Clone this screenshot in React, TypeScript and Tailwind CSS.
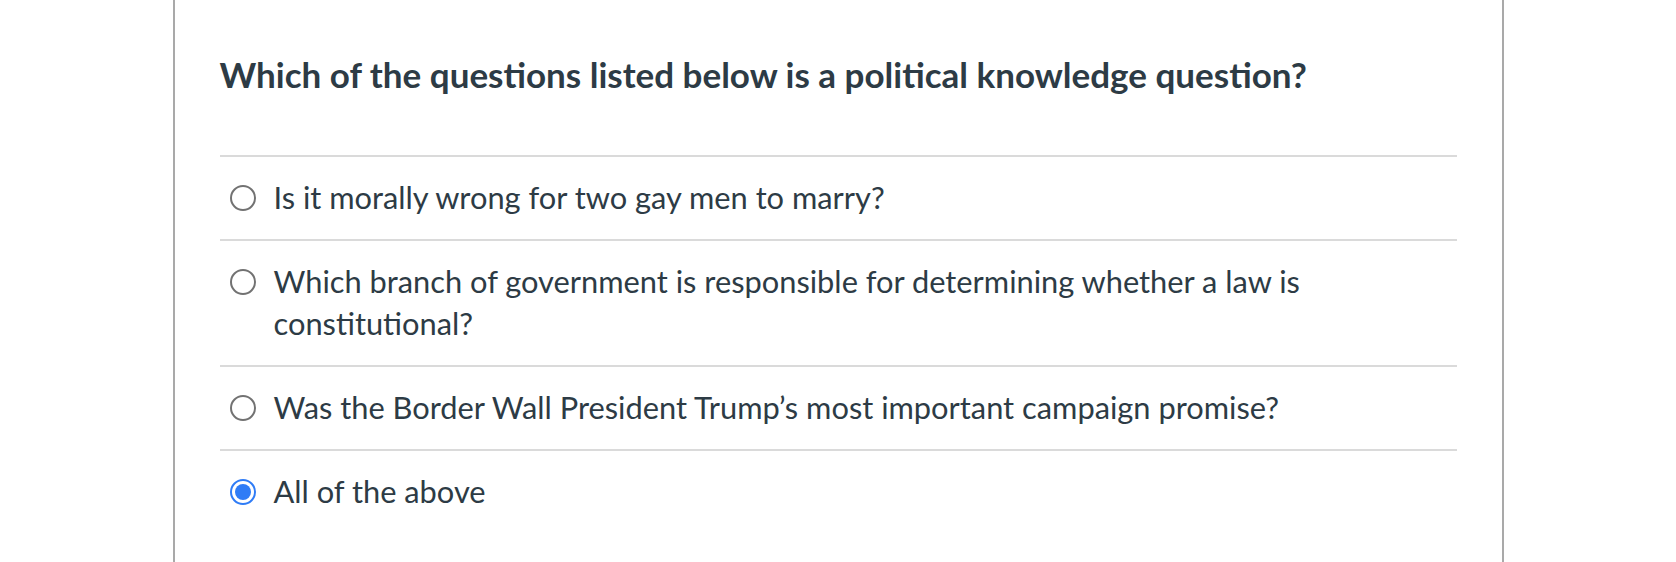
const options = [
  { id: 'a', text: 'Is it morally wrong for two gay men to marry?' },
  { id: 'b', text: 'Which branch of government is responsible for determining whether a law is constitutional?' },
  { id: 'c', text: 'Was the Border Wall President Trump\u2019s most important campaign promise?' },
  { id: 'd', text: 'All of the above' },
];

function Radio({ checked }: { checked: boolean }) {
  if (checked) {
    return (
      <span className="flex h-[26px] w-[26px] items-center justify-center rounded-full border-2 border-[#2f7cf6] bg-white">
        <span className="h-[16px] w-[16px] rounded-full bg-[#2f7cf6]" />
      </span>
    );
  }
  return <span className="block h-[26px] w-[26px] rounded-full border-2 border-[#727272] bg-white" />;
}

export default function App() {
  const selected = 'd';

  return (
    <div className="h-[562px] w-full overflow-hidden bg-white font-['Lato','Liberation_Sans',sans-serif] text-[#2d3b45]">
      <div className="mx-auto h-full w-[1331px] border-x-2 border-[#a9a9a9] px-[45px] pt-[49px]">
        <h2 className="text-[35px] font-bold leading-[50px]">
          Which of the questions listed below is a political knowledge question?
        </h2>

        <div className="mt-[56px]">
          {options.map((opt) => (
            <div key={opt.id} className="flex items-start gap-[18px] border-t-2 border-[#dadada] py-[20px]">
              <div className="ml-[10px] flex h-[42px] shrink-0 items-center">
                <Radio checked={selected === opt.id} />
              </div>
              <p className="text-[30.8px] leading-[42px]">{opt.text}</p>
            </div>
          ))}
        </div>
      </div>
    </div>
  );
}
